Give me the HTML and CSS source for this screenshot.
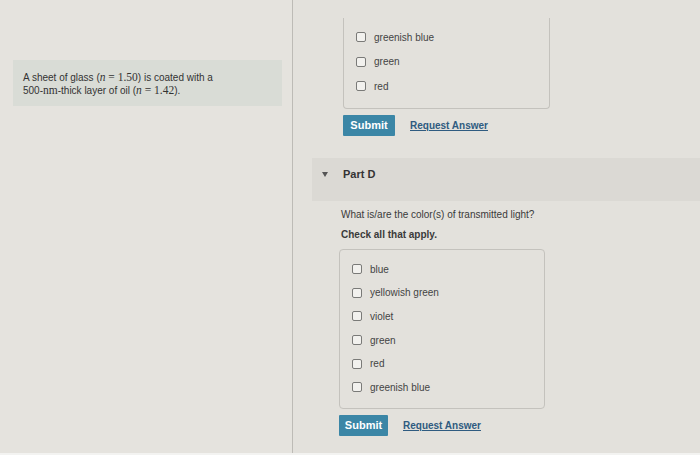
FILE: index.html
```html
<!DOCTYPE html>
<html lang="en">
<head>
  <meta charset="UTF-8">
  <meta name="viewport" content="width=device-width, initial-scale=1">
  <title>Thin film – Parts C and D</title>
  <link rel="stylesheet" href="styles.css">
</head>
<body>
  <div class="layout">
    <aside class="intro">
      <div class="problem">
        A sheet of glass (<span class="math"><i>n</i> = 1.50</span>) is coated with a<br>
        500-<span class="math">nm</span>-thick layer of oil (<span class="math"><i>n</i> = 1.42</span>).
      </div>
    </aside>

    <main class="main">
      <!-- Part C (scrolled, only the end of it is visible) -->
      <section class="part part-c">
        <div class="choices cut">
          <label class="choice"><span class="box"></span>greenish blue</label>
          <label class="choice"><span class="box"></span>green</label>
          <label class="choice"><span class="box"></span>red</label>
        </div>
        <div class="actions">
          <button class="submit">Submit</button>
          <a class="request" href="#">Request Answer</a>
        </div>
      </section>

      <section class="part part-d">
        <div class="part-head"><span class="caret"></span>Part D</div>
        <div class="part-body">
          <p class="question">What is/are the color(s) of transmitted light?</p>
          <p class="hint">Check all that apply.</p>
          <div class="choices">
            <label class="choice"><span class="box"></span>blue</label>
            <label class="choice"><span class="box"></span>yellowish green</label>
            <label class="choice"><span class="box"></span>violet</label>
            <label class="choice"><span class="box"></span>green</label>
            <label class="choice"><span class="box"></span>red</label>
            <label class="choice"><span class="box"></span>greenish blue</label>
          </div>
          <div class="actions">
            <button class="submit">Submit</button>
            <a class="request" href="#">Request Answer</a>
          </div>
        </div>
      </section>
    </main>
  </div>
  <div class="strip"></div>
</body>
</html>
```

FILE: styles.css
```css
:root {
  --bg: #e5e3de;
  --bg-main: #e3e1dc;
  --band: #dbd9d4;
  --problem: #d9dcd6;
  --border: #c4c2bd;
  --text: #3a3a3a;
  --btn: #3b86a6;
  --link: #2f5b80;
}
* {
  box-sizing: border-box;
  margin: 0; padding: 0;
}
html, body {
  height: 455px;
  overflow: hidden;
  background: var(--bg);
  color: var(--text);
  font-family: "Liberation Sans", Arial, sans-serif;
  font-size: 10px;
}
.layout {
  display: flex;
  height: 453px;
}
.strip {
  height: 2px;
  background: #f3f3f1;
}

/* left problem statement */
.intro {
  width: 293px;
  border-right: 1px solid #bdbbb6;
  padding: 60px 10px 0 13px;
}
.problem {
  background: var(--problem);
  height: 46px;
  padding: 11px 10px;
  line-height: 12px;
  color: #333;
}
.math {
  font-family: "Liberation Serif", "Times New Roman", serif;
  font-size: 11.5px;
}

/* right column */
.main {
  flex: 1;
  background: var(--bg-main);
}
.part-c {
  padding-left: 50px;
}
.choices {
  width: 207px;
  border: 1px solid var(--border);
  border-radius: 4px;
  padding: 8px 0 10px 12px;
}
.choices.cut {
  margin-top: 18px;
  border-top: none;
  border-radius: 0 0 4px 4px;
  padding: 7px 0 9px 12px;
}
.choice {
  display: flex;
  align-items: center;
  gap: 8px;
  height: 23.6px;
  color: #444;
}
.cut .choice {
  height: 24.5px;
}
.box {
  width: 10px; height: 10px;
  border: 1px solid #7a7a78;
  border-radius: 2px;
  background: #f2f1ee;
}
.actions {
  display: flex;
  align-items: center;
  gap: 15px;
  margin-top: 6px;
}
.submit {
  width: 52px; height: 21px;
  background: var(--btn);
  border: none;
  border-radius: 1px;
  color: #fff;
  font-family: inherit;
  font-size: 11px;
  font-weight: 700;
}
.request {
  color: var(--link);
  font-weight: 700;
  font-size: 10px;
  text-decoration: underline;
}

/* Part D */
.part-d {
  margin-top: 22px;
}
.part-head {
  margin-left: 19px;
  height: 43px;
  background: var(--band);
  display: flex;
  align-items: center;
  padding: 0 0 10px 10px;
  gap: 15px;
  font-size: 11px;
  font-weight: 700;
  color: #333;
}
.caret {
  width: 0; height: 0;
  border-left: 3px solid transparent;
  border-right: 3px solid transparent;
  border-top: 5px solid #555;
}
.part-body {
  padding-left: 48px;
}
.question {
  margin-top: 7px;
  line-height: 14px;
}
.hint {
  margin-top: 6px;
  line-height: 14px;
  font-weight: 700;
}
.part-body .choices {
  margin-top: 7px;
  margin-left: -2px;
  width: 206px;
  height: 160px;
}
.part-body .actions {
  margin-left: -2px;
  margin-top: 6px;
}
.part-body .submit {
  width: 49px;
}
```
